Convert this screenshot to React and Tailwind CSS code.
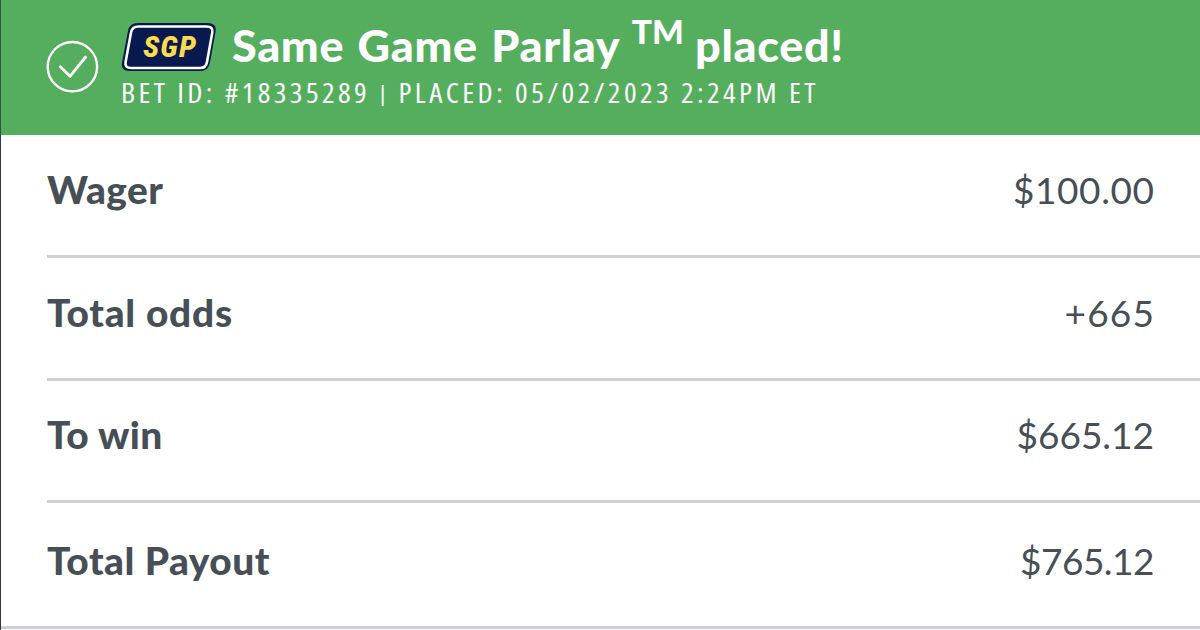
const rows = [
  {
    label: 'Wager',
    value: '$100.00',
    className: 'h-[120px] pb-[10px]',
    labelClass: 'tracking-[0.4px]',
    valueClass: 'tracking-[0.6px] -mr-[0.6px]',
  },
  {
    label: 'Total odds',
    value: '+665',
    className: 'h-[120px] pb-[10px]',
    labelClass: 'tracking-[0.7px]',
    valueClass: 'tracking-[1.2px] -mr-[1.2px]',
  },
  {
    label: 'To win',
    value: '$665.12',
    className: 'h-[119px] pb-[11px]',
    labelClass: 'tracking-[0.4px]',
    valueClass: '',
  },
];

function CheckIcon() {
  return (
    <svg className="h-[54px] w-[54px] shrink-0" viewBox="0 0 54 54" fill="none" stroke="white">
      <circle cx="27.4" cy="26.7" r="24.7" strokeWidth="2.4" />
      <path d="M15.4 26.8 L25 36.3 L40.6 17" strokeWidth="2.8" strokeLinecap="round" strokeLinejoin="round" />
    </svg>
  );
}

function SgpBadge() {
  return (
    <svg className="h-[49px] w-[96px] shrink-0" viewBox="0 0 96 49">
      <path
        d="M17 1 H87 Q96 1 94.5 10 L89 40.5 Q87.5 49 79.5 49 H8 Q-.5 49 1 40.5 L7 9 Q8.5 1 17 1 Z"
        fill="#08194f"
      />
      <path
        d="M17.5 4.5 H85.5 Q92.5 4.500 91.3 10.5 L86 40 Q85 46 79 46 H10 Q3.500 46 4.6 40 L10 10.5 Q11 4.5 17.5 4.5 Z"
        fill="none"
        stroke="white"
        strokeWidth="2.6"
      />
      <text
        x="22"
        y="35"
        textLength="54"
        lengthAdjust="spacingAndGlyphs"
        className="font-['Roboto',sans-serif] text-[28.5px] font-extrabold tracking-[1px] italic [font-stretch:75%]"
        fill="#fbdc4c"
      >
        SGP
      </text>
    </svg>
  );
}

function Row({ label, value, className, labelClass, valueClass }) {
  return (
    <div className={`flex items-center justify-between pr-[46px] ${className}`}>
      <span className={`origin-left scale-x-[1.05] font-black ${labelClass}`}>{label}</span>
      <span className={valueClass}>{value}</span>
    </div>
  );
}

export default function App() {
  return (
    <div className="flex h-[630px] w-[1200px] overflow-hidden bg-white font-['Lato',sans-serif] text-[37px] text-[#464f55]">
      <div className="w-px shrink-0">
        <div className="h-[135px] bg-[#2b5a3a]" />
        <div className="h-[495px] bg-[#35363b]" />
      </div>
      <div className="flex-1">
        <header className="flex h-[135px] gap-[22px] bg-[#54ae5e] pl-[44px] text-white">
          <div className="pt-[40px]">
            <CheckIcon />
          </div>
          <div className="pt-[22px]">
            <div className="flex h-[50px] gap-[15px]">
              <SgpBadge />
              <h1 className="origin-left scale-x-[1.045] text-[43px] leading-[47px] font-black tracking-[0.65px] whitespace-nowrap [word-spacing:2px]">
                Same Game Parlay <sup className="-top-[0.56em] -ml-[1px] text-[32px] tracking-normal">TM</sup>{' '}
                <span className="-ml-[2px]">placed!</span>
              </h1>
            </div>
            <p className="mt-[4px] origin-left scale-x-110 text-[27px] leading-[34px] font-['Open_Sans',sans-serif] [font-stretch:75%] tracking-[3.1px] whitespace-nowrap">
              BET ID: #18335289{' '}
              <span className="-mx-[1px] align-[2px] text-[21px] leading-none">|</span>{' '}
              PLACED: 05/02/2023 2:24PM ET
            </p>
          </div>
        </header>
        <main>
          <div className="ml-[46px]">
            {rows.map((row) => (
              <div key={row.label} className="border-b-[3px] border-[#cdd0d5]">
                <Row {...row} />
              </div>
            ))}
          </div>
          <div className="border-b-[3px] border-[#cdd0d5] pl-[46px]">
            <Row
              label="Total Payout"
              value="$765.12"
              className="h-[123px] pb-[8px]"
              labelClass="tracking-[0.5px]"
              valueClass="tracking-[-0.5px]"
            />
          </div>
        </main>
      </div>
    </div>
  );
}
